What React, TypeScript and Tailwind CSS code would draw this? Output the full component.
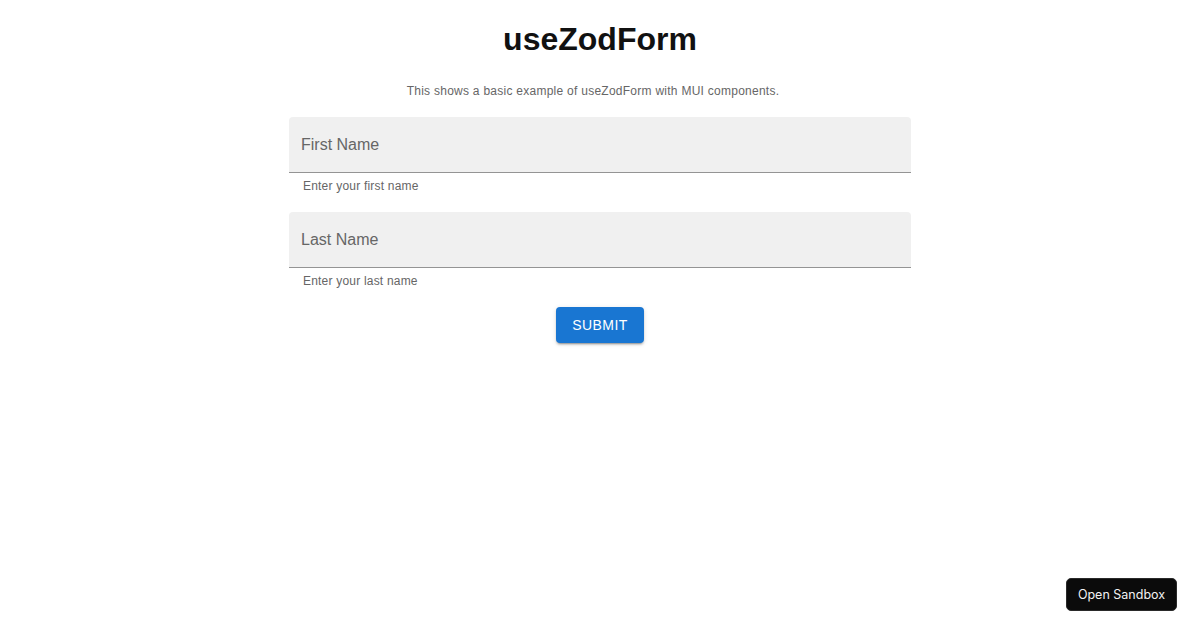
const Field = ({ label, helper }: { label: string; helper: string }) => {
  return (
    <div className="flex w-full flex-col">
      <div className="flex h-14 w-full items-center rounded-t-[4px] border-b border-[#949494] bg-[#f0f0f0] px-3">
        <span className="text-base text-[#666666]">{label}</span>
      </div>
      <p className="mx-3.5 mt-[3px] text-xs leading-5 tracking-[0.2px] text-[#666666]">
        {helper}
      </p>
    </div>
  );
};

const App = () => {
  return (
    <div className="relative h-[630px] w-full bg-white font-['Liberation_Sans',Arial,sans-serif]">
      <div className="flex flex-col items-center pt-[21px]">
        <h1 className="text-[32px] leading-[37px] font-bold text-[#111111]">useZodForm</h1>
        <p className="mt-[26px] pr-[14px] text-xs leading-[14px] tracking-[0.26px] text-[#666666]">
          This shows a basic example of useZodForm with MUI components.
        </p>
        <form className="mt-[19px] flex w-[622px] flex-col items-center gap-4">
          <Field label="First Name" helper="Enter your first name" />
          <Field label="Last Name" helper="Enter your last name" />
          <button
            type="button"
            className="flex h-9 w-[88px] items-center justify-center rounded-[4px] bg-[#1976d2] text-sm tracking-[0.03em] text-white shadow-[0_3px_1px_-2px_rgba(0,0,0,0.2),0_2px_2px_0_rgba(0,0,0,0.14),0_1px_5px_0_rgba(0,0,0,0.12)]"
          >
            SUBMIT
          </button>
        </form>
      </div>
      <div className="absolute right-[23px] bottom-[19px] flex h-[33px] w-[111px] items-center justify-center rounded-[5px] border border-[#2a2a2a] bg-[#0b0b0b] pt-px font-['Inter',sans-serif] text-[12.5px] text-[#f2f2f2]">
        Open Sandbox
      </div>
    </div>
  );
};

export default App;
